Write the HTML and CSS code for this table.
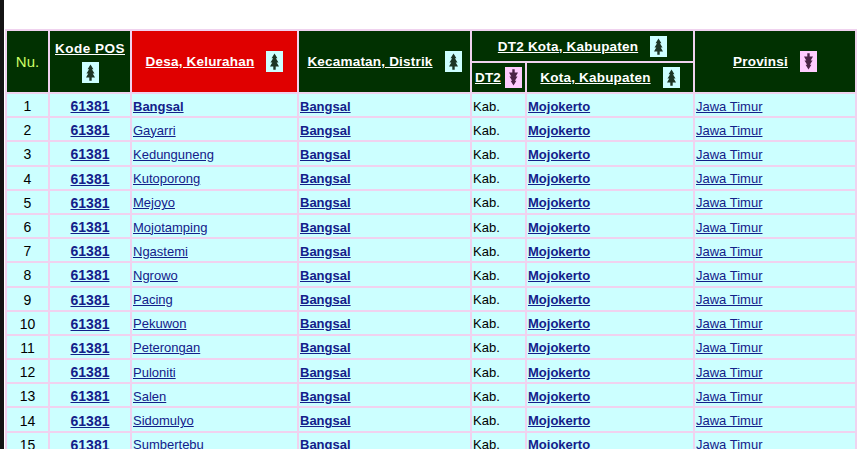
FILE: index.html
```html
<!DOCTYPE html>
<html>
<head>
<meta charset="utf-8">
<link rel="stylesheet" href="styles.css">
</head>
<body>
<svg width="0" height="0" class="defs">
  <defs>
    <symbol id="tree" viewBox="0 0 17 21">
      <path d="M8.5 2.5 L11.4 7.2 L9.9 7.2 L12.5 11.4 L10.7 11.4 L13 15.6 L9.7 15.6 L9.7 18.8 L7.3 18.8 L7.3 15.6 L4 15.6 L6.3 11.4 L4.5 11.4 L7.1 7.2 L5.6 7.2 Z"/>
    </symbol>
  </defs>
</svg>
<div class="page">
  <div class="strip"></div>
  <div class="main">
    <table class="pos">
      <colgroup>
        <col class="c-nu"><col class="c-kode"><col class="c-desa"><col class="c-kec"><col class="c-dt2"><col class="c-kota"><col class="c-prov">
      </colgroup>
      <thead>
        <tr class="hr1">
          <th rowspan="2" class="nu">Nu.</th>
          <th rowspan="2" class="kode"><a href="#">Kode POS</a><span class="ico up"><svg><use href="#tree"/></svg></span></th>
          <th rowspan="2" class="sorted"><span class="hc"><a href="#">Desa, Kelurahan</a><span class="ico up"><svg><use href="#tree"/></svg></span></span></th>
          <th rowspan="2"><span class="hc"><a href="#">Kecamatan, Distrik</a><span class="ico up"><svg><use href="#tree"/></svg></span></span></th>
          <th colspan="2"><span class="hc"><a href="#">DT2 Kota, Kabupaten</a><span class="ico up"><svg><use href="#tree"/></svg></span></span></th>
          <th rowspan="2"><span class="hc"><a href="#">Provinsi</a><span class="ico down"><svg><use href="#tree"/></svg></span></span></th>
        </tr>
        <tr class="hr2">
          <th class="dt2h"><span class="hc tight"><a href="#">DT2</a><span class="ico down"><svg><use href="#tree"/></svg></span></span></th>
          <th><span class="hc"><a href="#">Kota, Kabupaten</a><span class="ico up"><svg><use href="#tree"/></svg></span></span></th>
        </tr>
      </thead>
      <tbody>
        <tr><td class="n">1</td><td class="k"><a href="#">61381</a></td><td><a href="#" class="b">Bangsal</a></td><td><a href="#" class="b">Bangsal</a></td><td>Kab.</td><td><a href="#" class="b">Mojokerto</a></td><td><a href="#">Jawa Timur</a></td></tr>
        <tr><td class="n">2</td><td class="k"><a href="#">61381</a></td><td><a href="#">Gayarri</a></td><td><a href="#" class="b">Bangsal</a></td><td>Kab.</td><td><a href="#" class="b">Mojokerto</a></td><td><a href="#">Jawa Timur</a></td></tr>
        <tr><td class="n">3</td><td class="k"><a href="#">61381</a></td><td><a href="#">Kedunguneng</a></td><td><a href="#" class="b">Bangsal</a></td><td>Kab.</td><td><a href="#" class="b">Mojokerto</a></td><td><a href="#">Jawa Timur</a></td></tr>
        <tr><td class="n">4</td><td class="k"><a href="#">61381</a></td><td><a href="#">Kutoporong</a></td><td><a href="#" class="b">Bangsal</a></td><td>Kab.</td><td><a href="#" class="b">Mojokerto</a></td><td><a href="#">Jawa Timur</a></td></tr>
        <tr><td class="n">5</td><td class="k"><a href="#">61381</a></td><td><a href="#">Mejoyo</a></td><td><a href="#" class="b">Bangsal</a></td><td>Kab.</td><td><a href="#" class="b">Mojokerto</a></td><td><a href="#">Jawa Timur</a></td></tr>
        <tr><td class="n">6</td><td class="k"><a href="#">61381</a></td><td><a href="#">Mojotamping</a></td><td><a href="#" class="b">Bangsal</a></td><td>Kab.</td><td><a href="#" class="b">Mojokerto</a></td><td><a href="#">Jawa Timur</a></td></tr>
        <tr><td class="n">7</td><td class="k"><a href="#">61381</a></td><td><a href="#">Ngastemi</a></td><td><a href="#" class="b">Bangsal</a></td><td>Kab.</td><td><a href="#" class="b">Mojokerto</a></td><td><a href="#">Jawa Timur</a></td></tr>
        <tr><td class="n">8</td><td class="k"><a href="#">61381</a></td><td><a href="#">Ngrowo</a></td><td><a href="#" class="b">Bangsal</a></td><td>Kab.</td><td><a href="#" class="b">Mojokerto</a></td><td><a href="#">Jawa Timur</a></td></tr>
        <tr><td class="n">9</td><td class="k"><a href="#">61381</a></td><td><a href="#">Pacing</a></td><td><a href="#" class="b">Bangsal</a></td><td>Kab.</td><td><a href="#" class="b">Mojokerto</a></td><td><a href="#">Jawa Timur</a></td></tr>
        <tr><td class="n">10</td><td class="k"><a href="#">61381</a></td><td><a href="#">Pekuwon</a></td><td><a href="#" class="b">Bangsal</a></td><td>Kab.</td><td><a href="#" class="b">Mojokerto</a></td><td><a href="#">Jawa Timur</a></td></tr>
        <tr><td class="n">11</td><td class="k"><a href="#">61381</a></td><td><a href="#">Peterongan</a></td><td><a href="#" class="b">Bangsal</a></td><td>Kab.</td><td><a href="#" class="b">Mojokerto</a></td><td><a href="#">Jawa Timur</a></td></tr>
        <tr><td class="n">12</td><td class="k"><a href="#">61381</a></td><td><a href="#">Puloniti</a></td><td><a href="#" class="b">Bangsal</a></td><td>Kab.</td><td><a href="#" class="b">Mojokerto</a></td><td><a href="#">Jawa Timur</a></td></tr>
        <tr><td class="n">13</td><td class="k"><a href="#">61381</a></td><td><a href="#">Salen</a></td><td><a href="#" class="b">Bangsal</a></td><td>Kab.</td><td><a href="#" class="b">Mojokerto</a></td><td><a href="#">Jawa Timur</a></td></tr>
        <tr><td class="n">14</td><td class="k"><a href="#">61381</a></td><td><a href="#">Sidomulyo</a></td><td><a href="#" class="b">Bangsal</a></td><td>Kab.</td><td><a href="#" class="b">Mojokerto</a></td><td><a href="#">Jawa Timur</a></td></tr>
        <tr><td class="n">15</td><td class="k"><a href="#">61381</a></td><td><a href="#">Sumbertebu</a></td><td><a href="#" class="b">Bangsal</a></td><td>Kab.</td><td><a href="#" class="b">Mojokerto</a></td><td><a href="#">Jawa Timur</a></td></tr>
      </tbody>
    </table>
  </div>
</div>
</body>
</html>
```

FILE: styles.css
```css
html, body {
  margin: 0;
  padding: 0;
  background: #ffffff;
  overflow: hidden;
}
.defs {
  position: absolute;
  width: 0;
  height: 0;
}
.page {
  display: flex;
  height: 449px;
  width: 857px;
  overflow: hidden;
}
.strip {
  width: 4px;
  flex: none;
  background: #141414;
}
.main {
  flex: 1;
  padding: 29px 0 0 1px;
  background: #ffffff;
}
.pos {
  table-layout: fixed;
  width: 852px;
  border-collapse: separate;
  border-spacing: 2px;
  background: #f0d2ef;
  font-family: "Liberation Sans", Arial, sans-serif;
  font-size: 13px;
}
.c-nu { width: 41px; }
.c-kode { width: 80px; }
.c-desa { width: 165px; }
.c-kec { width: 171px; }
.c-dt2 { width: 53px; }
.c-kota { width: 166px; }
.c-prov { width: 160px; }

th {
  background: #013101;
  color: #ffffff;
  font-weight: bold;
  font-size: 13.5px;
  padding: 0;
  text-align: center;
  vertical-align: middle;
}
th a {
  color: #ffffff;
  text-decoration: underline;
  letter-spacing: 0.2px;
}
.hr1 th { height: 30px; }
.hr2 th { height: 29px; }
th.nu {
  color: #ccff66;
  font-weight: normal;
  font-size: 15px;
}
th.sorted {
  background: #e00000;
}
th.kode a {
  display: block;
  letter-spacing: 0.5px;
  margin-bottom: 6px;
}
th.kode .ico {
  margin: 0 auto;
}
.hc {
  display: inline-flex;
  align-items: center;
  gap: 12px;
}
.hc.tight {
  gap: 4px;
}
.ico {
  display: block;
  width: 17px;
  height: 21px;
  flex: none;
}
.ico svg {
  display: block;
  width: 17px;
  height: 21px;
}
.ico.up {
  background: #ccffff;
  fill: #1c3524;
}
.ico.down {
  background: #ffccff;
  fill: #4b2346;
}
.ico.down svg {
  transform: rotate(180deg);
}

td {
  background: #ccffff;
  height: 22.2px;
  padding: 2px 1px 0;
  box-sizing: border-box;
  color: #000000;
  white-space: nowrap;
  overflow: hidden;
  vertical-align: middle;
}
td a {
  color: #13208a;
  text-decoration: underline;
}
td a.b {
  font-weight: bold;
}
td.n {
  text-align: center;
  font-size: 14px;
}
td.k {
  text-align: center;
}
td.k a {
  font-weight: bold;
  font-size: 14px;
}
```
